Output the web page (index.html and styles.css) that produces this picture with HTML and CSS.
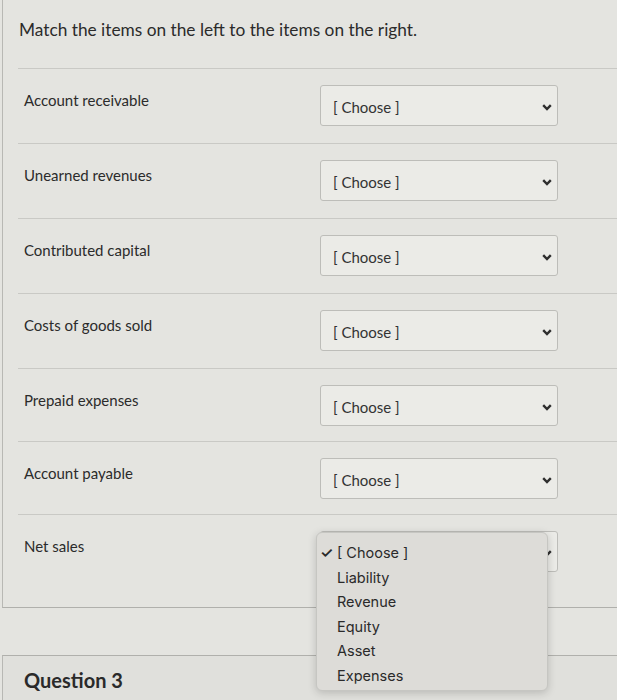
FILE: index.html
```html
<!DOCTYPE html>
<html>
<head>
<meta charset="utf-8">
<link rel="stylesheet" href="styles.css">
</head>
<body>
<div class="question">
  <div class="prompt">Match the items on the left to the items on the right.</div>
  <div class="rows">
    <div class="row"><div class="label">Account receivable</div><div class="select"><span>[ Choose ]</span><svg class="chev" viewBox="0 0 10 7" width="10" height="7"><path d="M1.2 1.2 L5 5 L8.8 1.2" fill="none" stroke="#2e2e2e" stroke-width="2.4"/></svg></div></div>
    <div class="row"><div class="label">Unearned revenues</div><div class="select"><span>[ Choose ]</span><svg class="chev" viewBox="0 0 10 7" width="10" height="7"><path d="M1.2 1.2 L5 5 L8.8 1.2" fill="none" stroke="#2e2e2e" stroke-width="2.4"/></svg></div></div>
    <div class="row"><div class="label">Contributed capital</div><div class="select"><span>[ Choose ]</span><svg class="chev" viewBox="0 0 10 7" width="10" height="7"><path d="M1.2 1.2 L5 5 L8.8 1.2" fill="none" stroke="#2e2e2e" stroke-width="2.4"/></svg></div></div>
    <div class="row"><div class="label">Costs of goods sold</div><div class="select"><span>[ Choose ]</span><svg class="chev" viewBox="0 0 10 7" width="10" height="7"><path d="M1.2 1.2 L5 5 L8.8 1.2" fill="none" stroke="#2e2e2e" stroke-width="2.4"/></svg></div></div>
    <div class="row"><div class="label">Prepaid expenses</div><div class="select"><span>[ Choose ]</span><svg class="chev" viewBox="0 0 10 7" width="10" height="7"><path d="M1.2 1.2 L5 5 L8.8 1.2" fill="none" stroke="#2e2e2e" stroke-width="2.4"/></svg></div></div>
    <div class="row"><div class="label">Account payable</div><div class="select"><span>[ Choose ]</span><svg class="chev" viewBox="0 0 10 7" width="10" height="7"><path d="M1.2 1.2 L5 5 L8.8 1.2" fill="none" stroke="#2e2e2e" stroke-width="2.4"/></svg></div></div>
    <div class="row last"><div class="label">Net sales</div><div class="select open"><span></span><svg class="chev" viewBox="0 0 10 7" width="10" height="7"><path d="M1.2 1.2 L5 5 L8.8 1.2" fill="none" stroke="#2e2e2e" stroke-width="2.4"/></svg>
      <ul class="menu">
        <li class="checked"><span class="check">✓</span>[ Choose ]</li>
        <li>Liability</li>
        <li>Revenue</li>
        <li>Equity</li>
        <li>Asset</li>
        <li>Expenses</li>
      </ul>
    </div></div>
  </div>
</div>
<div class="next">
  <div class="next-title">Question 3</div>
</div>
</body>
</html>
```
FILE: styles.css
```css
html, body {
  margin: 0;
  padding: 0;
}
body {
  background: #e4e4e0;
  font-family: Lato, "Liberation Sans", sans-serif;
  color: #2b2b2b;
  width: 617px;
  height: 700px;
  overflow: hidden;
}
.question {
  margin-left: 2px;
  border-left: 1px solid #b8b8b4;
  border-bottom: 1px solid #b0b0ac;
  box-sizing: border-box;
}
.prompt {
  font-size: 17.3px;
  padding: 19px 0 0 16px;
  height: 68px;
  box-sizing: border-box;
}
.rows {
  margin-left: 15px;
}
.row {
  display: flex;
  border-top: 1px solid #c9c9c5;
  height: 75px;
  box-sizing: border-box;
}
.row:nth-child(5),
.row:nth-child(6) {
  height: 73px;
}
.row.last {
  height: 93px;
}
.label {
  width: 302px;
  padding: 22px 0 0 6px;
  box-sizing: border-box;
  font-size: 15px;
}
.select {
  position: relative;
  margin-top: 16px;
  width: 238px;
  height: 41px;
  box-sizing: border-box;
  border: 1px solid #bdbdb9;
  border-radius: 3px;
  background: #ebebe7;
  display: flex;
  align-items: center;
  justify-content: space-between;
  padding: 3px 5px 0 12px;
  font-size: 15px;
  color: #333;
}
.chev {
  display: block;
}
.menu {
  position: absolute;
  left: -5px;
  top: 0;
  width: 232px;
  height: 159px;
  margin: 0;
  padding: 9px 0 0 0;
  box-sizing: border-box;
  list-style: none;
  background: #dddcd8;
  border: 1px solid #c6c6c2;
  border-radius: 6px;
  box-shadow: 0 2px 8px rgba(0,0,0,0.18);
  font-family: Inter, "Noto Sans", sans-serif;
  font-size: 14.5px;
  color: #2a2a2a;
}
.menu li {
  height: 24.6px;
  line-height: 22px;
  padding-left: 20px;
  position: relative;
}
.check {
  position: absolute;
  left: 3px;
  top: 0;
  font-size: 15px;
  font-weight: 600;
}
.next {
  margin-top: 47px;
  margin-left: 2px;
  border-top: 1px solid #b0b0ac;
  border-left: 1px solid #b8b8b4;
  height: 60px;
  background: #e0e0dc;
}
.next-title {
  padding: 12px 0 0 21px;
  font-size: 20px;
  font-weight: 700;
  color: #2a2a2a;
}
```
